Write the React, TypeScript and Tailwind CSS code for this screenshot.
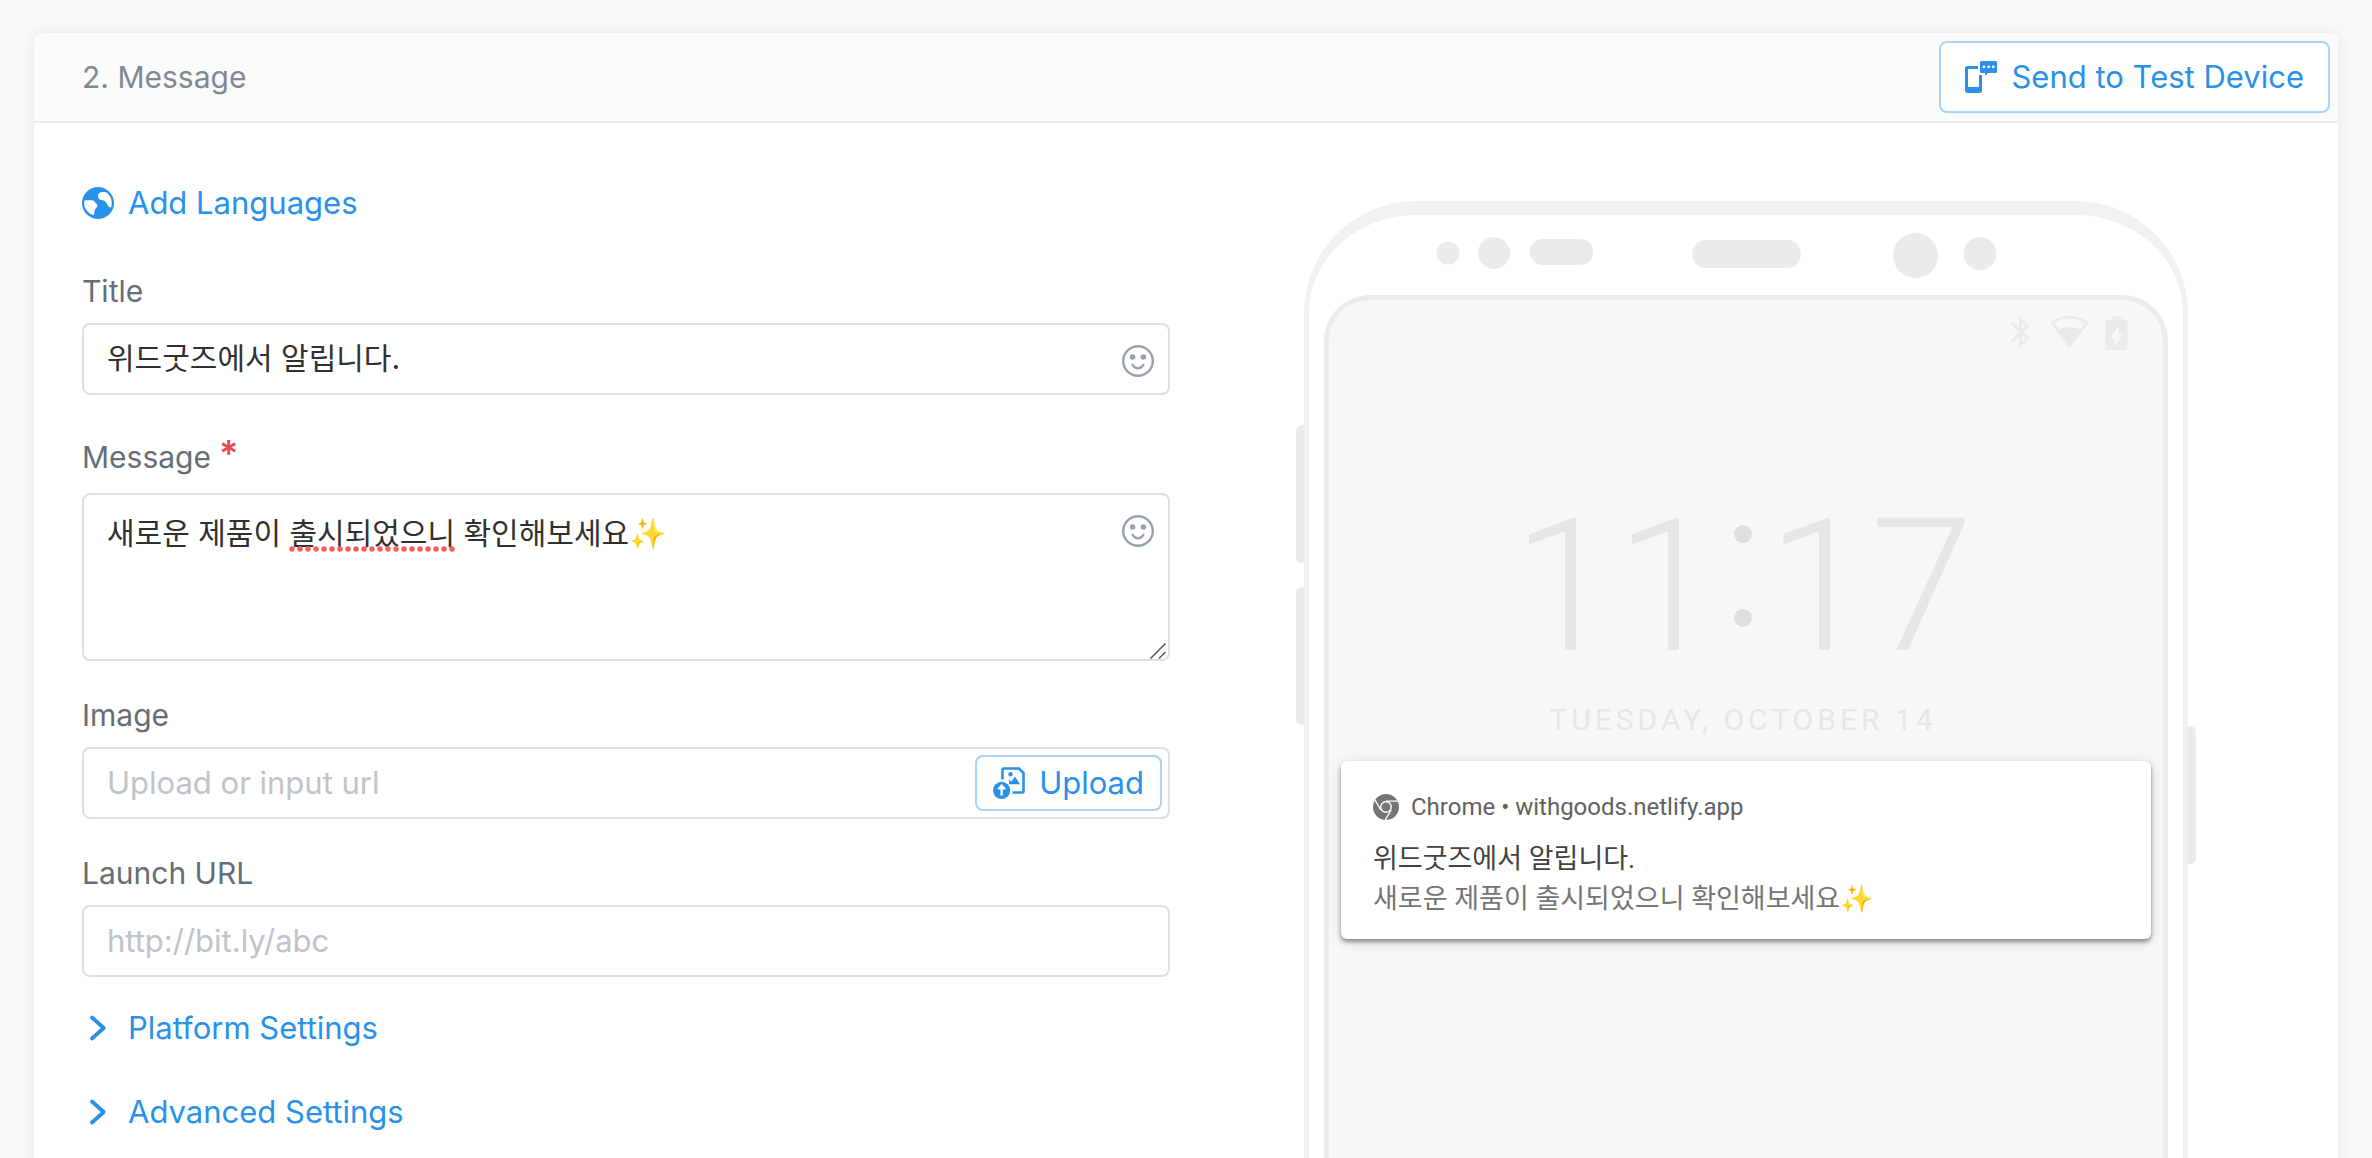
import { useState } from "react";
import type { ReactNode } from "react";

const TITLE = "위드굿즈에서 알립니다.";
const MESSAGE = "새로운 제품이 출시되었으니 확인해보세요✨";

const inputClass =
  "block w-full h-[72px] rounded-lg border-2 border-[#dce0e5] bg-white px-[23px] text-[30px] text-[#303030] placeholder:text-[31px] placeholder-[#bdc4cd] outline-none focus:border-[#2a91eb]";
const labelClass = "flex h-10 text-[30px] leading-10 text-[#656e76]";
const linkClass = "flex items-center text-[31px] leading-10 text-[#2a91eb]";

const GlobeIcon = () => (
  <svg viewBox="0 0 32 32" className="size-8 shrink-0" aria-hidden="true">
    <circle cx="16" cy="16" r="16" fill="#2a91eb" />
    <path
      d="M2.700 13.200h7.300c1.600 0 2.300.8 3 2 .6 1.100 2.300 1.600 2.400 3.300.1 2.100-2.500 3.200-2.900 5-.3 1.500-.3 3.300-.7 4.800C6 26.500 2.100 21.500 2.100 16c0-1 .2-1.900.6-2.800z"
      fill="#fff"
    />
    <path
      d="M16 9c0-2.700 1.900-4.100 4.500-4.100h3.300c3.700 2.500 6 6.500 6 11.100 0 1.500-.2 2.900-.7 4.200-1.300.5-2.200.1-2.900-1.100-1-1.900-1.900-4-3.500-5.100-1.200-.9-3.100-.3-4.500-1.200C16.700 11.800 16 10.600 16 9z"
      fill="#fff"
    />
  </svg>
);

const DeviceIcon = () => (
  <svg viewBox="0 0 32 32" className="size-8 shrink-0" aria-hidden="true">
    <path
      fill="#2a91eb"
      fillRule="evenodd"
      d="M2.500 5H13v3H3v18h11V14h3v15.500a2.500 2.500 0 0 1-2.500 2.500h-12A2.500 2.500 0 0 1 0 29.500v-22A2.500 2.500 0 0 1 2.500 5z"
    />
    <path fill="#2a91eb" d="M16.500 0h14A1.500 1.500 0 0 1 32 1.500v9a1.500 1.500 0 0 1-1.500 1.500H23l-3 3v-3h-3.500a1.500 1.500 0 0 1-1.500-1.500v-9A1.500 1.500 0 0 1 16.500 0z" />
    <circle cx="19" cy="5.800" r="1.400" fill="#fff" />
    <circle cx="23.600" cy="5.800" r="1.400" fill="#fff" />
    <circle cx="28.200" cy="5.800" r="1.400" fill="#fff" />
  </svg>
);

const UploadIcon = () => (
  <svg viewBox="0 0 32 32" className="size-8 shrink-0" aria-hidden="true">
    <path d="M9.500 12.500V2.500a1 1 0 0 1 1-1H26l4.500 4.500v18.500a1 1 0 0 1-1 1H19.500" fill="none" stroke="#2a91eb" strokeWidth="2.600" />
    <circle cx="17.500" cy="7.300" r="2.200" fill="#2a91eb" />
    <path d="M16 17.300v-4.600l2.500 1.800 3.500-5 5.200 7.800z" fill="#2a91eb" />
    <circle cx="8.600" cy="23.400" r="8.600" fill="#2a91eb" />
    <path d="M8.600 28.500v-9M5.300 22.300l3.300-3.500 3.300 3.500" fill="none" stroke="#fff" strokeWidth="2.400" />
  </svg>
);

const SmileIcon = () => (
  <svg viewBox="0 0 32 32" className="size-8" aria-hidden="true">
    <circle cx="16" cy="16" r="14.800" fill="none" stroke="#96a1b0" strokeWidth="2.400" />
    <circle cx="10.600" cy="12" r="2.800" fill="#96a1b0" />
    <circle cx="21.400" cy="12" r="2.800" fill="#96a1b0" />
    <path d="M10.600 19.800c2.600 4.800 8.200 4.800 10.800 0" fill="none" stroke="#96a1b0" strokeWidth="2.400" strokeLinecap="round" />
  </svg>
);

const ChevronIcon = () => (
  <svg viewBox="0 0 32 32" className="size-8 shrink-0" aria-hidden="true">
    <path d="M10 5.500L21.700 16 10 26.500" fill="none" stroke="#2a91eb" strokeWidth="3.800" strokeLinecap="round" strokeLinejoin="round" />
  </svg>
);

const ChromeIcon = () => (
  <svg viewBox="0 0 24 24" className="size-[26px] shrink-0" aria-hidden="true">
    <circle cx="12" cy="12" r="12" fill="#757575" />
    <path d="M12 6.500h11M7.200 14.800L1.800 5.400M16.800 14.800L11.300 24" stroke="#fff" strokeWidth="1.200" />
    <circle cx="12" cy="12" r="5.500" fill="#fff" />
    <circle cx="12" cy="12" r="4.200" fill="#757575" />
  </svg>
);

const StatusIcons = () => (
  <svg viewBox="0 0 120 36" className="h-9 w-[120px]" fill="#ebebeb" aria-hidden="true">
    <path d="M2.500 8.500l16 15.500-7 7V5l7 7L2.500 28" fill="none" stroke="#ebebeb" strokeWidth="3" />
    <path
      fillRule="evenodd"
      d="M41 8.500C52 -.5 69 -.5 80 8.500L60.500 34zM45.300 9.200l5 6.600c6-3.600 14.400-3.600 20.400 0l5-6.600c-9-6.400-21.400-6.400-30.400 0z"
    />
    <path
      fillRule="evenodd"
      d="M103 2h9v3.500h4.500a2 2 0 0 1 2 2v27a2 2 0 0 1-2 2h-18a2 2 0 0 1-2-2v-27a2 2 0 0 1 2-2H103zM110 11l-9 13h4v9l9-13h-4z"
    />
  </svg>
);

const PhoneSensors = () => (
  <svg viewBox="0 0 844 80" className="block w-full" fill="#ebebeb" aria-hidden="true">
    <circle cx="124" cy="38" r="11.500" />
    <circle cx="170" cy="38" r="16" />
    <rect x="206" y="24" width="63" height="26" rx="13" />
    <rect x="368" y="25" width="109" height="28" rx="14" />
    <circle cx="591.500" cy="40.500" r="22.500" />
    <circle cx="656" cy="38.500" r="16.500" />
  </svg>
);

const EmojiButton = () => (
  <button type="button" aria-label="Insert emoji" className="absolute right-4 top-[22px]">
    <SmileIcon />
  </button>
);

const DisclosureLink = ({ children }: { children: ReactNode }) => (
  <button type="button" className={linkClass}>
    <ChevronIcon />
    <span className="ml-3.5">{children}</span>
  </button>
);

const PhonePreview = ({ title, message }: { title: string; message: string }) => (
  <div className="relative mx-auto mt-[78px] w-full max-w-[884px] font-['Roboto','Noto_Sans_CJK_KR',sans-serif]">
    <div className="absolute -left-2 top-56 h-[138px] w-2 rounded-l-md bg-[#ebebeb]" />
    <div className="absolute -left-2 top-[386px] h-[138px] w-2 rounded-l-md bg-[#ebebeb]" />
    <div className="absolute -right-2 top-[525px] h-[138px] w-2 rounded-r-md bg-[#ebebeb]" />
    <div className="rounded-t-[112px] border-x-[5px] border-t-[14px] border-[#f1f1f1] px-[15px]">
      <PhoneSensors />
      <div className="min-h-[1000px] rounded-t-[46px] border-x-[5px] border-t-[5px] border-[#ebebeb] bg-[#f7f7f7] px-3">
        <div className="flex justify-end pr-[22px] pt-3.5">
          <StatusIcons />
        </div>
        <div className="pr-1.5 pt-[146px] text-[#e6e6e6]">
          <div className="flex justify-center text-[186px] font-light leading-[180px]">
            <span>11</span>
            <span className="flex w-12 flex-col items-center justify-center gap-[66px] pb-5">
              <span className="size-[18px] rounded-full bg-[#dedede]" />
              <span className="size-[18px] rounded-full bg-[#dedede]" />
            </span>
            <span>17</span>
          </div>
          <p className="mt-6 text-center text-[30px] leading-10 tracking-[4px]">TUESDAY, OCTOBER 14</p>
        </div>
        <div className="mt-[21px] rounded-md bg-white px-8 pb-5 pt-[30px] shadow-[0_3px_4px_rgba(0,0,0,0.4),0_2px_14px_rgba(0,0,0,0.12)]">
          <div className="flex items-center gap-3 text-2xl text-[#616161]">
            <ChromeIcon />
            <span>Chrome • withgoods.netlify.app</span>
          </div>
          <p className="mt-4 text-[27px] leading-10 text-[#424242]">{title}</p>
          <p className="text-[27px] leading-10 text-[#757575]">{message}</p>
        </div>
      </div>
    </div>
  </div>
);

const App = () => {
  const [title, setTitle] = useState(TITLE);
  const [message, setMessage] = useState(MESSAGE);
  const [image, setImage] = useState("");
  const [launchUrl, setLaunchUrl] = useState("");

  return (
    <div className="h-screen overflow-hidden bg-[#f8f9fb] px-[34px] pt-[33px] font-['Inter','Noto_Sans_CJK_KR',sans-serif]">
      <section className="rounded-lg bg-white shadow-[0_0_16px_rgba(0,0,0,0.08)]">
        <header className="flex items-center justify-between rounded-t-lg border-b-2 border-[#e9eceb] bg-[#fafcfb] py-2 pl-12 pr-2">
          <h2 className="text-[30px] text-[#808993]">2. Message</h2>
          <button
            type="button"
            className="flex h-[72px] items-center gap-3.5 rounded-lg border-2 border-[#a9d3f8] bg-white px-6 text-[31px] text-[#2a91eb]"
          >
            <DeviceIcon />
            Send to Test Device
          </button>
        </header>

        <div className="grid grid-cols-2 gap-8 px-12">
          <form className="pt-[60px]" onSubmit={(e) => e.preventDefault()}>
            <button type="button" className={linkClass}>
              <GlobeIcon />
              <span className="ml-3.5">Add Languages</span>
            </button>

            <label htmlFor="title" className={`${labelClass} mt-12`}>
              Title
            </label>
            <div className="relative mt-3">
              <input id="title" className={`${inputClass} pb-1.5`} value={title} onChange={(e) => setTitle(e.target.value)} />
              <EmojiButton />
            </div>

            <label htmlFor="message" className={`${labelClass} mt-[42px] gap-2`}>
              Message
              <span className="text-4xl leading-8 font-semibold text-[#e54b4f]">*</span>
            </label>
            <div className="relative mt-4">
              <textarea
                id="message"
                spellCheck={false}
                className="block h-[168px] w-full resize-none rounded-lg border-2 border-[#dce0e5] px-[23px] py-[18px] text-[30px] leading-10 text-[#303030] outline-none focus:border-[#2a91eb]"
                value={message}
                onChange={(e) => setMessage(e.target.value)}
              />
              {message === MESSAGE && (
                <svg className="pointer-events-none absolute left-[207px] top-[53px] h-1.5 w-[168px]" viewBox="0 0 168 6" aria-hidden="true">
                  <path d="M3 3h162" stroke="#f9605c" strokeWidth="5.500" strokeLinecap="round" strokeDasharray="0 8" />
                </svg>
              )}
              <EmojiButton />
              <svg className="pointer-events-none absolute bottom-0.5 right-1 size-4" viewBox="0 0 16 16" aria-hidden="true">
                <path d="M.5 15.500l15-15M9 15.500l6.500-6.500" stroke="#555" strokeWidth="1.500" />
              </svg>
            </div>

            <label htmlFor="image" className={`${labelClass} mt-[34px]`}>
              Image
            </label>
            <div className="relative mt-3">
              <input
                id="image"
                className={inputClass}
                placeholder="Upload or input url"
                value={image}
                onChange={(e) => setImage(e.target.value)}
              />
              <button
                type="button"
                className="absolute right-2 top-2 flex h-14 items-center gap-3.5 rounded-lg border-2 border-[#a9d3f8] bg-white px-4 text-[31px] text-[#2a91eb]"
              >
                <UploadIcon />
                Upload
              </button>
            </div>

            <label htmlFor="launch-url" className={`${labelClass} mt-[34px]`}>
              Launch URL
            </label>
            <input
              id="launch-url"
              className={`${inputClass} mt-3`}
              placeholder="http://bit.ly/abc"
              value={launchUrl}
              onChange={(e) => setLaunchUrl(e.target.value)}
            />

            <div className="mt-[31px] flex flex-col items-start gap-11">
              <DisclosureLink>Platform Settings</DisclosureLink>
              <DisclosureLink>Advanced Settings</DisclosureLink>
            </div>
          </form>

          <PhonePreview title={title} message={message} />
        </div>
      </section>
    </div>
  );
};

export default App;
